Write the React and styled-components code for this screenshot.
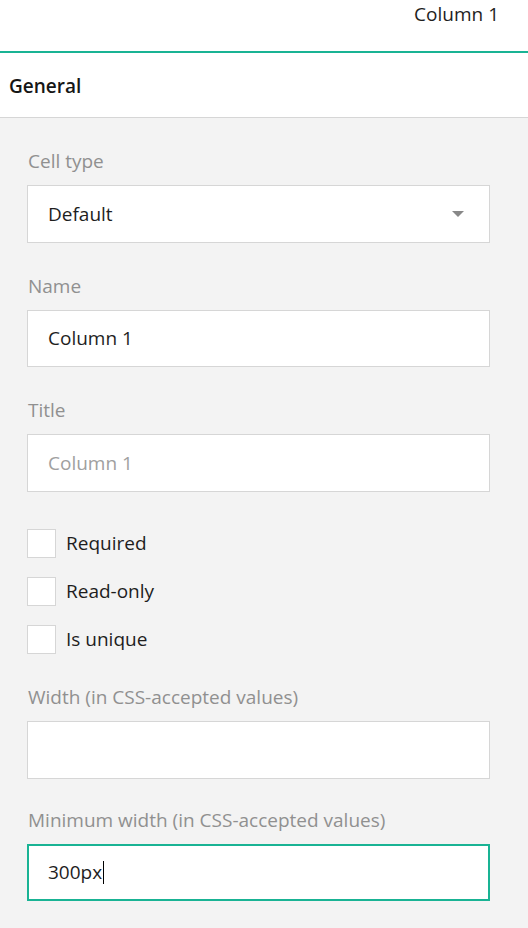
import React from "react";
import styled, { createGlobalStyle } from "styled-components";

const Global = createGlobalStyle`
  html, body { margin: 0; padding: 0; background: #f3f3f3; }
  body { font-family: "Open Sans", "Liberation Sans", sans-serif; }
  * { box-sizing: border-box; }
`;

const Page = styled.div`
  width: 528px;
  min-height: 928px;
  background: #f3f3f3;
  display: flex;
  flex-direction: column;
`;

const TopBar = styled.div`
  height: 53px;
  background: #fff;
  border-bottom: 2px solid #19b394;
  display: flex;
  justify-content: flex-end;
  align-items: flex-start;
  padding: 1px 29px 0 0;
  font-size: 19px;
  line-height: 26px;
  color: #1e1e1e;
`;

const SectionHeader = styled.div`
  height: 65px;
  background: #fff;
  border-bottom: 1px solid #d6d6d6;
  display: flex;
  align-items: center;
  padding: 2px 0 0 9px;
  font-size: 19px;
  font-weight: 600;
  color: #161616;
`;

const Content = styled.div`
  flex: 1;
  padding: 31px 38px 0 27px;
  display: flex;
  flex-direction: column;
`;

const Field = styled.div`
  display: flex;
  flex-direction: column;
  margin-bottom: ${(p) => p.$mb ?? 31}px;
`;

const Label = styled.div`
  font-size: 19px;
  line-height: 24px;
  color: #909090;
  padding-left: 1px;
  margin-bottom: 12px;
`;

const Box = styled.div`
  height: 57.5px;
  background: #fff;
  border: ${(p) => (p.$focused ? "2px solid #19b394" : "1px solid #d6d6d6")};
  display: flex;
  align-items: center;
  padding-left: ${(p) => (p.$focused ? 19 : 20)}px;
  padding-right: 25px;
  font-size: 19px;
  color: ${(p) => (p.$placeholder ? "#a0a0a0" : "#1e1e1e")};
`;

const Value = styled.span`
  flex: 1;
`;

const Caret = styled.span`
  display: inline-block;
  width: 1px;
  height: 23px;
  background: #000;
  margin-left: 1px;
`;

const Arrow = styled.svg`
  width: 12px;
  height: 6px;
  fill: #888;
`;

const CheckList = styled.div`
  display: flex;
  flex-direction: column;
  gap: 19px;
  margin: 6.5px 0 31px;
`;

const CheckRow = styled.label`
  display: flex;
  align-items: center;
  gap: 10px;
  height: 29px;
  font-size: 19px;
  line-height: 24px;
  color: #1e1e1e;
`;

const CheckText = styled.span`
  margin-top: -2px;
`;

const CheckBox = styled.span`
  width: 29px;
  height: 29px;
  background: #fff;
  border: 1px solid #d6d6d6;
  flex: none;
`;

export default function App() {
  return (
    <>
      <Global />
      <Page>
        <TopBar>Column 1</TopBar>
        <SectionHeader>General</SectionHeader>
        <Content>
          <Field>
            <Label>Cell type</Label>
            <Box>
              <Value>Default</Value>
              <Arrow viewBox="0 0 12 6">
                <path d="M0 0h12L6 6z" />
              </Arrow>
            </Box>
          </Field>
          <Field>
            <Label>Name</Label>
            <Box>Column 1</Box>
          </Field>
          <Field>
            <Label>Title</Label>
            <Box $placeholder>Column 1</Box>
          </Field>
          <CheckList>
            <CheckRow><CheckBox /><CheckText>Required</CheckText></CheckRow>
            <CheckRow><CheckBox /><CheckText>Read-only</CheckText></CheckRow>
            <CheckRow><CheckBox /><CheckText>Is unique</CheckText></CheckRow>
          </CheckList>
          <Field $mb={29}>
            <Label>Width (in CSS-accepted values)</Label>
            <Box />
          </Field>
          <Field>
            <Label>Minimum width (in CSS-accepted values)</Label>
            <Box $focused>
              <span>300px</span>
              <Caret />
            </Box>
          </Field>
        </Content>
      </Page>
    </>
  );
}
